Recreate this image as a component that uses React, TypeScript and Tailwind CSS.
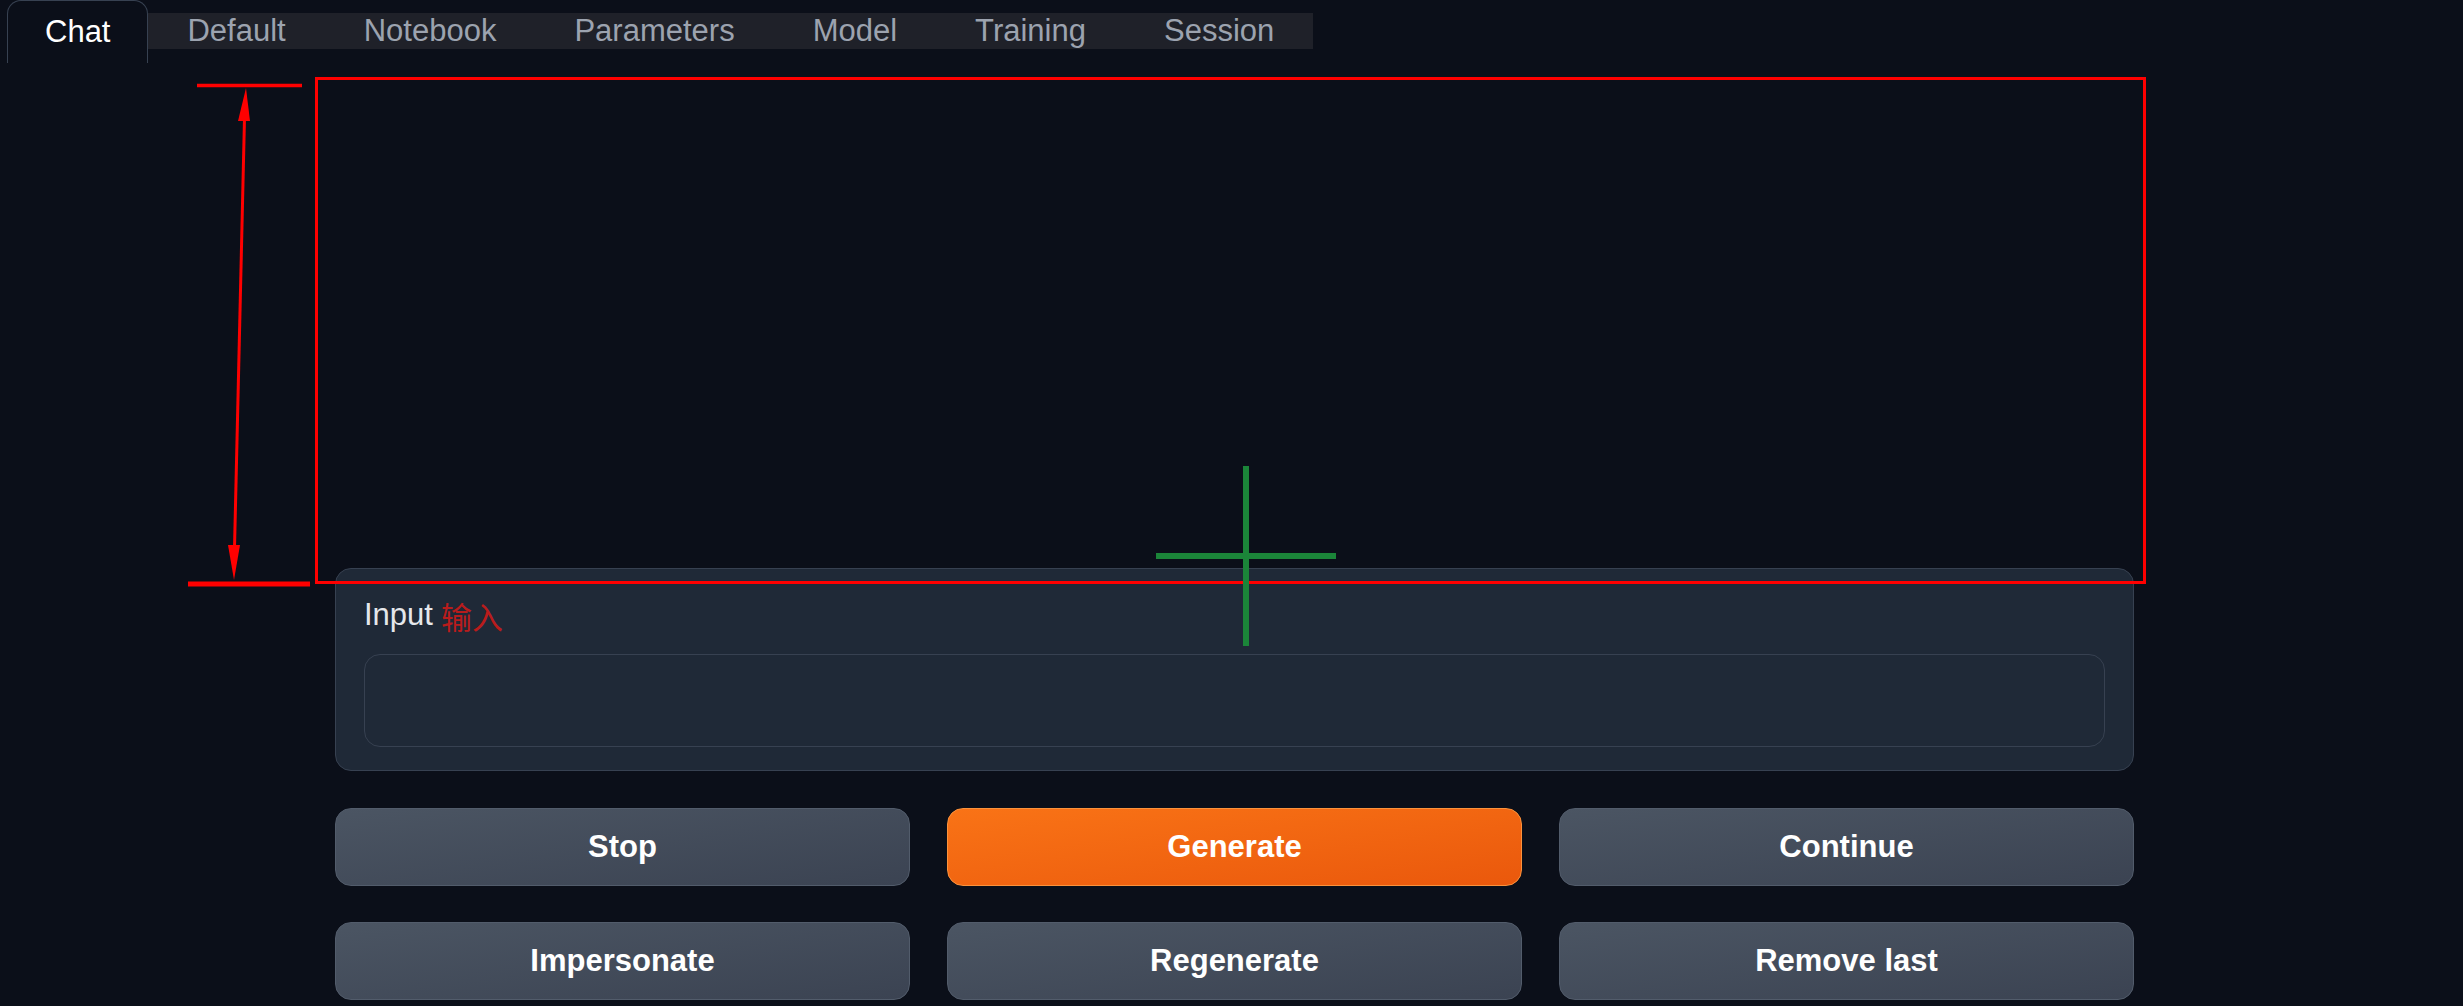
import React from 'react';

const tabs = ['Default', 'Notebook', 'Parameters', 'Model', 'Training', 'Session'];

const buttons = [
  { label: 'Stop', primary: false },
  { label: 'Generate', primary: true },
  { label: 'Continue', primary: false },
  { label: 'Impersonate', primary: false },
  { label: 'Regenerate', primary: false },
  { label: 'Remove last', primary: false },
];

function Annotations() {
  // red measuring marks + green crosshair drawn over the screenshot
  return (
    <svg
      className="absolute inset-0 pointer-events-none"
      width={2463}
      height={1006}
      viewBox="0 0 2463 1006"
    >
      <rect x={316.5} y={78.5} width={1828} height={504} fill="none" stroke="#ff0000" strokeWidth={3} />
      <line x1={197} y1={85.5} x2={302} y2={85.5} stroke="#ff0000" strokeWidth={3.5} />
      <line x1={188} y1={584} x2={310} y2={584} stroke="#ff0000" strokeWidth={5} />
      <line x1={244.5} y1={118} x2={234.5} y2={548} stroke="#ff0000" strokeWidth={3} />
      <polygon points="246,88 238,121 250,121" fill="#ff0000" />
      <polygon points="234,580 228,545 240,545" fill="#ff0000" />
      <line x1={1246} y1={466} x2={1246} y2={646} stroke="#1b8539" strokeWidth={6} />
      <line x1={1156} y1={556} x2={1336} y2={556} stroke="#1b8539" strokeWidth={6} />
    </svg>
  );
}

export default function App() {
  return (
    <div className="relative h-screen w-full overflow-hidden bg-[#0b0f19] font-['Liberation_Sans',Arial,sans-serif]">
      {/* Tabs */}
      <nav className="flex items-start pl-[7px] h-[63px]">
        <div className="h-[63px] px-[37px] pt-[13px] border border-b-0 border-[#374151] rounded-t-[14px] text-white text-[31px] leading-[36px]">
          Chat
        </div>
        <div className="flex mt-[13px] h-[36px] bg-[#1f2129]">
          {tabs.map((t) => (
            <div key={t} className="px-[39px] text-[31px] leading-[36px] text-[#9ca3af]">
              {t}
            </div>
          ))}
        </div>
      </nav>

      <main className="ml-[335px] w-[1799px]">
        {/* Chat history (empty) */}
        <div className="h-[505px]" />

        {/* Input panel */}
        <div className="rounded-[16px] border border-[#374151] bg-[#1f2937] px-[28px] pt-[28px] pb-[23px]">
          <div className="flex items-center gap-[8px] h-[36px] text-[31px] leading-[36px] text-[#e5e7eb]">
            <span>Input</span>
            <span className="text-[#b91c1c] leading-none font-['Noto_Sans_CJK_SC',sans-serif]">输入</span>
          </div>
          <div className="mt-[21px] h-[93px] rounded-[16px] border border-[#374151] bg-[#1f2937]" />
        </div>

        {/* Buttons */}
        <div className="mt-[37px] grid grid-cols-3 gap-x-[37px] gap-y-[36px]">
          {buttons.map((b) => (
            <button
              key={b.label}
              className={
                b.primary
                  ? 'h-[78px] rounded-[16px] border border-[#fb923c] bg-gradient-to-br from-[#f97316] to-[#ea580c] text-white text-[31px] font-bold'
                  : 'h-[78px] rounded-[16px] border border-[#525c6b] bg-gradient-to-br from-[#4b5563] to-[#3b4352] text-white text-[31px] font-bold'
              }
            >
              {b.label}
            </button>
          ))}
        </div>
      </main>

      <Annotations />
    </div>
  );
}
